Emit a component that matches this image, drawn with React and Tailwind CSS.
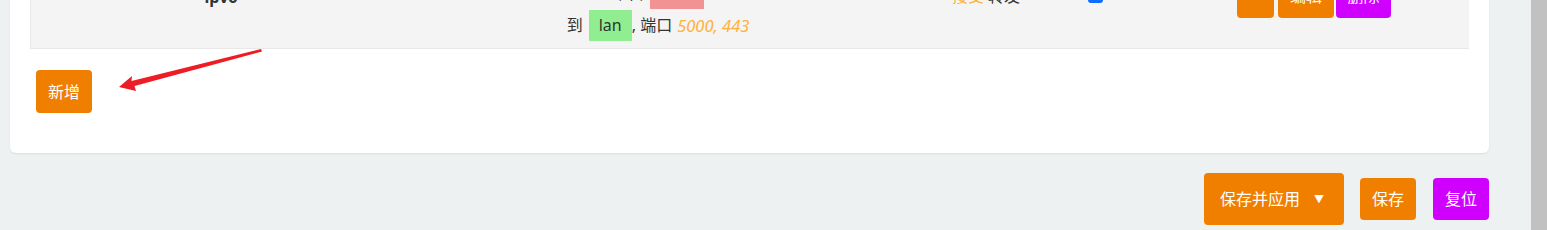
import React from 'react';

const font = { fontFamily: '"Noto Sans", "Noto Sans CJK SC", sans-serif' };

const RuleRow = () => (
    <div className="grid grid-cols-[380px_498px_154px_68px_1fr] h-[106px] bg-[#f4f4f4] border-b border-l border-[#e8e8e8] text-[16px] text-[#333]">
        <div className="flex items-center justify-center font-bold pt-[2px]">ipv6</div>
        <div className="flex flex-col items-center self-start pt-[3px] -ml-[4px]">
            <div className="h-8 leading-8">IPv6-ICMP</div>
            <div className="h-8 flex items-start">
                <span className="leading-[31px]">来自</span>
                <span className="ml-[6px] h-[31px] leading-[31px] px-[11px] bg-[#f29393]">wan</span>
            </div>
            <div className="h-8 flex items-start">
                <span className="leading-[31px]">到</span>
                <span className="ml-[6px] h-[31px] leading-[31px] px-[10px] bg-[#90ee90]">lan</span>
                <span className="leading-[31px]">, 端口 </span>
                <span className="leading-[31px] italic text-[#ffb13c] ml-[5px] text-[16.5px]">5000, 443</span>
            </div>
        </div>
        <div className="flex items-center justify-center">
            <span className="text-[#ffb13c]">接受</span>
            <span className="ml-1">转发</span>
        </div>
        <div className="flex items-center justify-center">
            <span className="w-[15px] h-[15px] rounded-[3px] bg-[#0d6efd] -ml-[4px]" />
        </div>
        <div className="flex items-center pl-[106px] text-white">
            <button className="w-[37px] h-[44px] rounded-[4px] bg-[#f07f00]" />
            <button className="ml-[4px] w-[56px] h-[44px] rounded-[4px] bg-[#f07f00]">编辑</button>
            <button className="ml-[2px] w-[55px] h-[44px] rounded-[4px] bg-[#d000ff]">删除</button>
        </div>
    </div>
);

const Arrow = () => (
    <svg className="absolute left-0 top-0 pointer-events-none" width="300" height="120" viewBox="0 0 300 120">
        <polygon points="119,87 132,76 131.5,81 261,49 262,51.5 134.5,86 136,91" fill="#ee1c25" />
    </svg>
);

export default function App() {
    return (
        <div className="relative w-full h-[230px] flex overflow-hidden bg-[#eef1f2]" style={font}>
            <div className="flex-1 pl-[10px] pr-[42px]">
                <div className="-mt-[100px] pt-[43px] px-[20px] pb-[40px] bg-white rounded-[6px] shadow-[0_1px_2px_rgba(0,0,0,0.08)]">
                    <RuleRow />
                    <button className="mt-[21px] ml-[6px] w-[56px] h-[43px] rounded-[4px] bg-[#f07f00] text-white text-[16px]">新增</button>
                </div>
                <div className="mt-[20px] flex items-center justify-end">
                    <button className="w-[140px] h-[52px] rounded-[4px] bg-[#f07f00] text-white text-[16px] flex items-center pl-[16px]">
                        保存并应用
                        <span className="ml-[14px] text-[10px]">▼</span>
                    </button>
                    <button className="ml-[16px] w-[56px] h-[42px] rounded-[4px] bg-[#f07f00] text-white text-[16px]">保存</button>
                    <button className="ml-[17px] w-[56px] h-[42px] rounded-[4px] bg-[#d000ff] text-white text-[16px]">复位</button>
                </div>
            </div>
            <div className="w-[16px] h-full bg-[#c1c1c1]" />
            <Arrow />
        </div>
    );
}
